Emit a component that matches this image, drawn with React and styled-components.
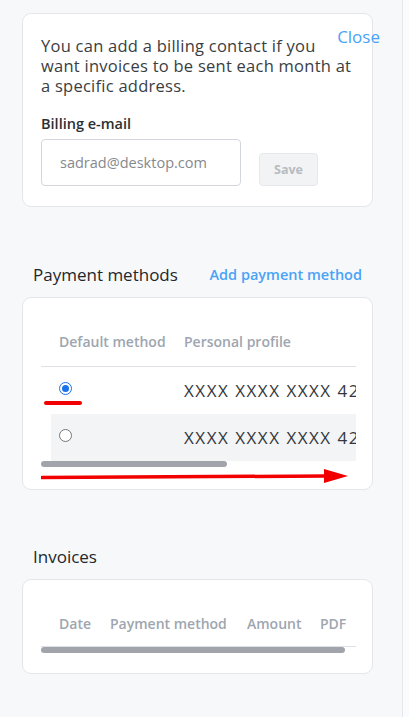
import React from 'react'
import styled, { createGlobalStyle } from 'styled-components'

const GlobalStyle = createGlobalStyle`
  html, body {
    margin: 0;
    padding: 0;
    background: #fafbfc;
  }
  body {
    font-family: 'Open Sans', 'Lato', sans-serif;
    color: #2b2f33;
  }
`

/* Page */
const Page = styled.div`
  display: flex;
  min-height: 717px;
`
const Main = styled.main`
  width: 403px;
  box-sizing: border-box;
  background: #f7f8fa;
  border-right: 1px solid #e6e8eb;
  padding: 13px 29px 40px 22px;
`
const Card = styled.section`
  position: relative;
  background: #fff;
  border: 1px solid #e4e6e9;
  border-radius: 9px;
  padding: ${p => p.$pad || '0'};
`
const SectionHead = styled.div`
  display: flex;
  justify-content: space-between;
  align-items: center;
  height: 22px;
  margin: ${p => p.$top || '0'} 11px 12px 11px;
`
const SectionTitle = styled.h2`
  margin: 0;
  font-size: 17px;
  font-weight: 400;
  color: #23272b;
`
const LinkButton = styled.a`
  font-size: 14.5px;
  font-weight: 600;
  color: #4aa3f6;
  cursor: pointer;
`

/* Billing contact */
const CloseLink = styled.a`
  position: absolute;
  top: 11px;
  right: -8px;
  font-size: 17px;
  color: #4aa3f6;
  cursor: pointer;
`
const Intro = styled.p`
  margin: 0;
  width: 312px;
  font-size: 16.5px;
  line-height: 20px;
  letter-spacing: 0.25px;
  color: #3a3e42;
`
const FieldLabel = styled.label`
  display: block;
  margin: 18px 0 6px;
  font-size: 14.5px;
  font-weight: 600;
  color: #2b2f33;
`
const FieldRow = styled.div`
  display: flex;
  align-items: flex-end;
  gap: 18px;
`
const Input = styled.input`
  width: 200px;
  height: 47px;
  box-sizing: border-box;
  border: 1px solid #d3d7dc;
  border-radius: 4px;
  padding: 0 18px;
  font-family: inherit;
  font-size: 14.5px;
  color: #333;
  &::placeholder {
    color: #85898e;
  }
`
const SaveButton = styled.button`
  width: 59px;
  height: 33px;
  border: 1px solid #e6e8eb;
  border-radius: 4px;
  background: #f2f3f5;
  font-family: inherit;
  font-size: 12.5px;
  font-weight: 700;
  color: #b8bcc1;
`

/* Tables */
const TableScroll = styled.div`
  width: 315px;
  overflow: hidden;
`
const Row = styled.div`
  display: flex;
  height: ${p => p.$h || 47}px;
  align-items: center;
  white-space: nowrap;
  border-bottom: ${p => (p.$line ? '1px solid #dde1e6' : 'none')};
  background: ${p => (p.$shade ? '#f3f4f6' : 'transparent')};
  margin-left: ${p => (p.$shade ? 10 : 0)}px;
`
const Cell = styled.div`
  flex: none;
  display: flex;
  align-items: center;
  width: ${p => p.$w}px;
  padding-left: ${p => p.$pl ?? 18}px;
  box-sizing: border-box;
  font-size: ${p => (p.$head ? 14 : 17)}px;
  font-weight: ${p => (p.$head ? 600 : 400)};
  color: ${p => (p.$head ? '#9ea6af' : '#34383c')};
  letter-spacing: ${p => (p.$head ? '0' : '1.5px')};
`
const Radio = styled.span`
  position: relative;
  display: inline-block;
  width: 13px;
  height: 13px;
  box-sizing: border-box;
  border-radius: 50%;
  border: 1px solid ${p => (p.$on ? '#1a73e8' : '#767676')};
  background: #fff;
  margin-bottom: 5px;
  &::after {
    content: '';
    position: absolute;
    inset: 2px;
    border-radius: 50%;
    background: ${p => (p.$on ? '#1a73e8' : 'transparent')};
  }
`
const Mark = styled.span`
  position: absolute;
  left: -15px;
  top: 19px;
  width: 38px;
  height: 4px;
  border-radius: 2px;
  background: #f20000;
`
const RadioWrap = styled.span`
  position: relative;
  display: flex;
`
const Thumb = styled.div`
  width: ${p => p.$w}px;
  height: 6px;
  border-radius: 3px;
  background: #a1a5ab;
`
const Arrow = styled.svg`
  display: block;
  margin-top: 1px;
`

const App = () => {
  return (
    <Page>
      <GlobalStyle />
      <Main>
        <Card $pad="22px 18px 20px 18px">
          <CloseLink>Close</CloseLink>
          <Intro>
            You can add a billing contact if you want invoices to be sent each month at a specific address.
          </Intro>
          <FieldLabel>Billing e-mail</FieldLabel>
          <FieldRow>
            <Input placeholder="sadrad@desktop.com" />
            <SaveButton>Save</SaveButton>
          </FieldRow>
        </Card>

        <SectionHead $top="56px">
          <SectionTitle>Payment methods</SectionTitle>
          <LinkButton>Add payment method</LinkButton>
        </SectionHead>
        <Card $pad="18px 18px 5px 18px">
          <TableScroll>
            <Row $h={50} $line>
              <Cell $head $w={125}>Default method</Cell>
              <Cell $head $w={240} $pl={18}>Personal profile</Cell>
            </Row>
            <Row>
              <Cell $w={125}>
                <RadioWrap>
                  <Radio $on />
                  <Mark />
                </RadioWrap>
              </Cell>
              <Cell $w={240} $pl={18}>XXXX XXXX XXXX 4242</Cell>
            </Row>
            <Row $shade>
              <Cell $w={115} $pl={8}>
                <Radio />
              </Cell>
              <Cell $w={240} $pl={18}>XXXX XXXX XXXX 4242</Cell>
            </Row>
            <Thumb $w={186} />
          </TableScroll>
          <Arrow width="310" height="16" viewBox="0 0 310 16">
            <path d="M1 9.5 L286 8" stroke="#f20000" strokeWidth="3.5" strokeLinecap="round" />
            <polygon points="283,1 307,8 283,15" fill="#f20000" />
          </Arrow>
        </Card>

        <SectionHead $top="55px">
          <SectionTitle>Invoices</SectionTitle>
        </SectionHead>
        <Card $pad="20px 18px 20px 18px">
          <TableScroll>
            <Row $h={46} $line>
              <Cell $head $w={69}>Date</Cell>
              <Cell $head $w={137} $pl={0}>Payment method</Cell>
              <Cell $head $w={73} $pl={0}>Amount</Cell>
              <Cell $head $w={60} $pl={0}>PDF</Cell>
            </Row>
            <Thumb $w={304} />
          </TableScroll>
        </Card>
      </Main>
    </Page>
  )
}

export default App
